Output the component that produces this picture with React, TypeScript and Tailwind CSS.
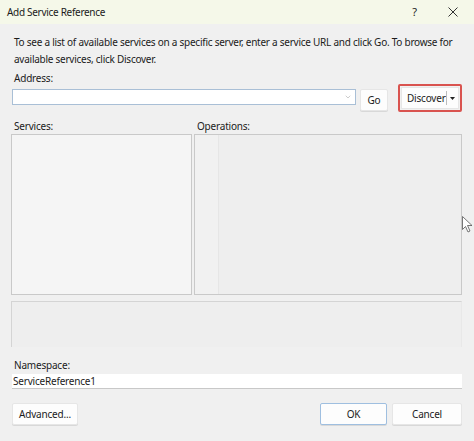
import { ChevronDown } from 'lucide-react';

const font = { fontFamily: '"Noto Sans", "Open Sans", Arial, sans-serif' };

function Button({ label, className = '' }: { label: string; className?: string }) {
    return (
        <button className={`h-[22px] bg-[#fdfdfd] border border-[#e6e6e6] rounded-[2px] text-[10px] tracking-[-0.2px] text-[#1b1b1b] shadow-[0_1px_0_#d8d8d8] ${className}`}>
            {label}
        </button>
    );
}

export default function App() {
    return (
        <div style={font} className="relative w-[474px] h-[441px] overflow-hidden bg-[#f0f0f0] text-[#1b1b1b] text-[10px]">
            {/* title bar */}
            <div className="h-[24px] flex items-center bg-[#f5f8e9] pl-[7px]">
                <span className="text-[10px] tracking-[-0.3px]">Add Service Reference</span>
                <span className="ml-auto mr-[31px] text-[11px]">?</span>
                <svg width="10" height="10" viewBox="0 0 10 10" className="mr-[16px]">
                    <path d="M0.5 0.5 L9.5 9.5 M9.5 0.5 L0.5 9.5" stroke="#333" strokeWidth="1" />
                </svg>
            </div>

            <div className="px-[12px]">
                <p className="mt-[10px] pl-[2px] leading-[17px] tracking-[-0.25px]">
                    <span className="block whitespace-nowrap">To see a list of available services on a specific server, enter a service URL and click Go. To browse for</span>
                    <span className="block whitespace-nowrap">available services, click Discover.</span>
                </p>

                <div className="mt-[2px] pl-[2px] leading-[16px] tracking-[-0.2px]">Address:</div>

                {/* address row */}
                <div className="mt-[-2px] h-[28px] flex items-start">
                    <div className="mt-[5px] w-[344px] h-[16px] bg-white border border-[#a9bfd6] flex items-center justify-end pr-[3px]">
                        <ChevronDown size={8} strokeWidth={1.5} className="text-[#9a9a9a]" />
                    </div>
                    <Button label="Go" className="mt-[5px] ml-[4px] w-[28px]" />
                    <div className="ml-[10px] w-[64px] h-[28px] border-2 border-[#d9534f] rounded-[2px] p-[1px] flex">
                        <div className="flex-1 flex items-center bg-[#fdfdfd] border border-[#e6e6e6]">
                            <span className="pl-[5px] text-[10px] tracking-[-0.2px]">Discover</span>
                            <span className="ml-auto h-[14px] w-px bg-[#bdbdbd]" />
                            <svg width="5" height="3" viewBox="0 0 5 3" className="mx-[3px]">
                                <path d="M0 0 H5 L2.5 3 Z" fill="#222" />
                            </svg>
                        </div>
                    </div>
                </div>

                {/* list labels */}
                <div className="mt-[6px] flex leading-[16px] tracking-[-0.2px]">
                    <span className="pl-[2px] w-[182px]">Services:</span>
                    <span className="pl-[3px]">Operations:</span>
                </div>

                <div className="flex gap-[2px] -ml-px">
                    <div className="w-[181px] h-[161px] bg-[#f5f5f5] border border-[#c9c9c9]" />
                    <div className="flex-1 h-[161px] bg-[#eeeeee] border border-[#c9c9c9] flex">
                        <div className="w-[24px] bg-[#f1f1f1] border-r border-[#e6e6e6]" />
                    </div>
                </div>

                {/* status area */}
                <div className="mt-[6px] -ml-px h-[46px] bg-[#eeeeee] border-t border-l border-[#d4d4d4] border-r-[#e8e8e8] border-r" />

                <div className="mt-[10px] pl-[2px] leading-[16px] tracking-[-0.2px]">Namespace:</div>
                <div className="mt-[1px] h-[15px] bg-white border-b border-[#c8c8c8] flex items-center pl-[1px] tracking-[-0.2px]">
                    ServiceReference1
                </div>

                {/* bottom buttons */}
                <div className="mt-[14px] flex">
                    <Button label="Advanced..." className="w-[66px]" />
                    <Button label="OK" className="ml-auto w-[67px] !border-[#9fbfe0]" />
                    <Button label="Cancel" className="ml-[5px] w-[70px]" />
                </div>
            </div>

            {/* mouse pointer */}
            <svg width="12" height="17" viewBox="0 0 12 17" className="absolute left-[462px] top-[216px]">
                <path d="M0.5 0.5 V13.5 L3.5 10.5 L6 16 L8 15 L5.5 9.5 H10 Z" fill="#fff" stroke="#555" strokeWidth="0.8" />
            </svg>
        </div>
    );
}
